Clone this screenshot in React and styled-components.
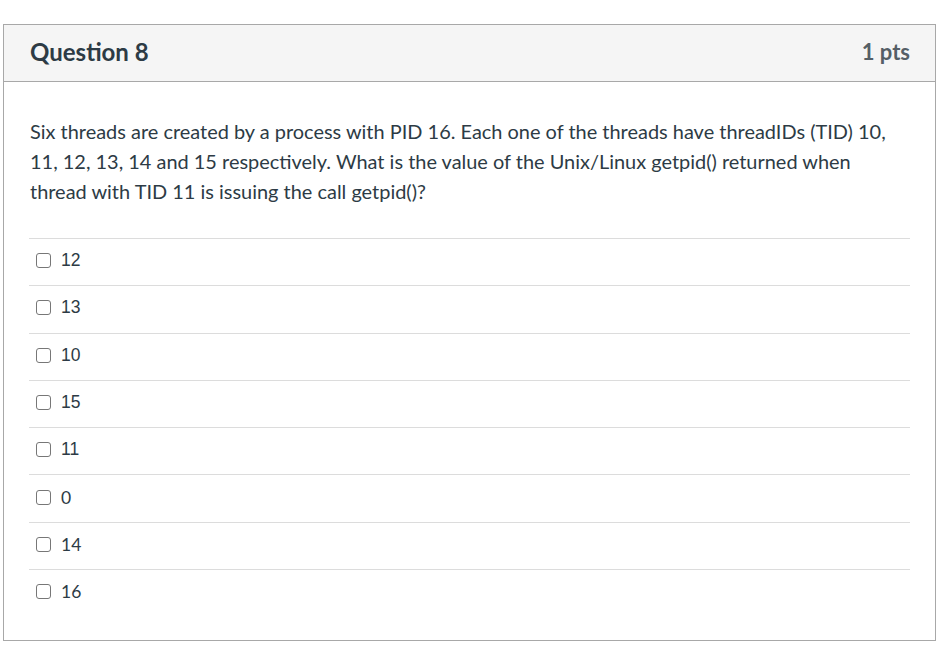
import React from 'react'
import styled, { createGlobalStyle } from 'styled-components'

const GlobalStyle = createGlobalStyle`
  body {
    margin: 0;
    background: #fff;
    font-family: Lato, "Noto Sans", sans-serif;
    color: #2d3b45;
  }
`

const answers = [
  { label: '12', arial: true },
  { label: '13', arial: true },
  { label: '10', arial: true },
  { label: '15', arial: true },
  { label: '11', arial: true },
  { label: '0' },
  { label: '14' },
  { label: '16' },
]

const App = () => {
  return (
    <Page>
      <GlobalStyle />
      <QuestionCard>
        <Header>
          <Title>Question 8</Title>
          <Points>1 pts</Points>
        </Header>
        <Body>
          <QuestionText>
            Six threads are created by a process with PID 16. Each one of the threads have threadIDs (TID) 10,<br />
            11, 12, 13, 14 and 15 respectively. What is the value of the Unix/Linux getpid() returned when<br />
            thread with TID 11 is issuing the call getpid()?
          </QuestionText>
          <AnswerList>
            {answers.map((a, i) => (
              <AnswerRow key={i}>
                <CheckBox />
                <AnswerLabel $arial={a.arial}>{a.label}</AnswerLabel>
              </AnswerRow>
            ))}
          </AnswerList>
        </Body>
      </QuestionCard>
    </Page>
  )
}

const Page = styled.div`
  padding: 24px 1px 0 3px;
`

const QuestionCard = styled.div`
  border: 1px solid #a8a8a8;
  height: 617px;
  box-sizing: border-box;
  background: #fff;
`

const Header = styled.div`
  display: flex;
  justify-content: space-between;
  align-items: center;
  height: 56px;
  padding: 0 25px 0 26px;
  background: #f5f5f5;
  border-bottom: 1px solid #a8a8a8;
`

const Title = styled.div`
  font-size: 24px;
  font-weight: bold;
  color: #2d3b45;
  margin-top: -3px;
`

const Points = styled.div`
  font-size: 22px;
  font-weight: bold;
  color: #555f66;
  margin-top: -3px;
`

const Body = styled.div`
  padding: 34px 25px 0 25px;
`

const QuestionText = styled.div`
  font-size: 19.95px;
  line-height: 30px;
  padding-left: 1px;
  margin-bottom: 32px;
  white-space: nowrap;
`

const AnswerList = styled.div``

const AnswerRow = styled.div`
  display: flex;
  align-items: center;
  gap: 10px;
  height: 47.3px;
  box-sizing: border-box;
  padding: 0 0 3px 7px;
  border-top: 1px solid #dcdcdc;
`

const CheckBox = styled.span`
  width: 13px;
  height: 13px;
  border: 1px solid #777;
  border-radius: 3px;
  background: #fff;
  flex-shrink: 0;
`

const AnswerLabel = styled.span`
  font-size: 17.5px;
  font-family: ${(p) => (p.$arial ? '"Liberation Sans", Arial, sans-serif' : 'Lato, sans-serif')};
  color: #2d3b45;
`

export default App
